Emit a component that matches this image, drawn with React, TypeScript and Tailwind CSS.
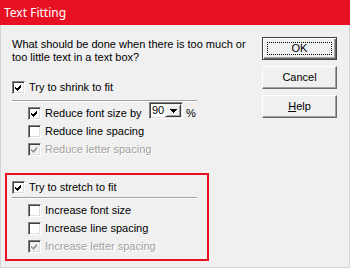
import type { ReactNode } from "react";

function Check({ checked, disabled }: { checked?: boolean; disabled?: boolean }) {
  return (
    <span
      className={`w-[13px] h-[13px] shrink-0 flex items-center justify-center border border-t-[#808080] border-l-[#808080] border-b-white border-r-white shadow-[inset_1px_1px_0_#404040,inset_-1px_-1px_0_#dfdfdf] ${
        disabled ? "bg-[#f0f0f0]" : "bg-white"
      }`}
    >
      {checked && (
        <svg width="11" height="11" viewBox="0 0 11 11" shapeRendering="crispEdges">
          <path d="M2 4.5 L4 6.5 L8 2.5 L8 5 L4 9 L2 7 Z" fill={disabled ? "#a0a0a0" : "#000"} />
        </svg>
      )}
    </span>
  );
}

function Label({ children, disabled }: { children: ReactNode; disabled?: boolean }) {
  return (
    <span
      className={`ml-[4px] whitespace-nowrap ${
        disabled ? "text-[#a0a0a0] [text-shadow:1px_1px_0_#ffffff]" : "text-black"
      }`}
    >
      {children}
    </span>
  );
}

function Header({ label }: { label: string }) {
  return (
    <div className="h-[16px] flex items-center">
      <Check checked />
      <Label>{label}</Label>
    </div>
  );
}

function Option({ label, checked, disabled }: { label: string; checked?: boolean; disabled?: boolean }) {
  return (
    <div className="h-[18px] pl-[16px] flex items-center">
      <Check checked={checked} disabled={disabled} />
      <Label disabled={disabled}>{label}</Label>
    </div>
  );
}

function Separator() {
  return <div className="w-[185px] h-[2px] border-t border-t-[#a0a0a0] border-b border-b-white" />;
}

function Button({ children, isDefault }: { children: ReactNode; isDefault?: boolean }) {
  if (isDefault) {
    return (
      <div className="relative w-[75px] h-[23px] flex items-center justify-center bg-[#f0f0f0] border border-[#404040] shadow-[inset_1px_1px_0_#ffffff,inset_-1px_-1px_0_#696969,inset_-2px_-2px_0_#a0a0a0]">
        <span className="absolute inset-[4px] border border-dotted border-black" />
        {children}
      </div>
    );
  }
  return (
    <div className="w-[75px] h-[23px] flex items-center justify-center bg-[#f0f0f0] border border-t-white border-l-white border-b-[#696969] border-r-[#696969] shadow-[inset_-1px_-1px_0_#a0a0a0]">
      {children}
    </div>
  );
}

export default function App() {
  return (
    <div className="w-[350px] h-[268px] flex flex-col font-['Liberation_Sans',Tahoma,Arial,sans-serif] text-[11px] text-black">
      <div className="h-[25px] shrink-0 bg-[#e81123] text-white text-[12px] flex items-center pl-[4px] font-['Noto_Sans','Liberation_Sans',sans-serif]">
        Text Fitting
      </div>

      <div className="flex-1 flex bg-[#f0f0f0] border-x border-b border-[#d4d4d4]">
        <div className="flex-1 pl-[4px] pt-[13px]">
          <p className="pl-[7px] leading-[13px] whitespace-nowrap">
            What should be done when there is too much or
            <br />
            too little text in a text box?
          </p>

          <div className="pl-[7px] mt-[15px]">
            <Header label="Try to shrink to fit" />
            <div className="mt-[5px]">
              <Separator />
            </div>
            <div className="mt-[2px]">
              <div className="h-[18px] pl-[16px] flex items-center">
                <Check checked />
                <span className="ml-[4px] w-[102px] overflow-hidden whitespace-nowrap">Reduce font size by</span>
                <div className="ml-[2px] self-start -mt-[2px] w-[34px] h-[17px] bg-white flex items-center border border-t-[#808080] border-l-[#808080] border-b-white border-r-white shadow-[inset_1px_1px_0_#404040,inset_-1px_-1px_0_#dfdfdf]">
                  <span className="pl-[2px]">90</span>
                  <span className="ml-auto mr-[1px] w-[16px] h-[13px] bg-[#f0f0f0] flex items-center justify-center border border-t-[#f0f0f0] border-l-[#f0f0f0] border-b-[#404040] border-r-[#404040] shadow-[inset_1px_1px_0_#ffffff,inset_-1px_-1px_0_#a0a0a0]">
                    <svg width="7" height="4" viewBox="0 0 7 4" shapeRendering="crispEdges">
                      <path d="M0 0 H7 L3.5 4 Z" fill="#000" />
                    </svg>
                  </span>
                </div>
                <span className="ml-[3px]">%</span>
              </div>
              <Option label="Reduce line spacing" />
              <Option label="Reduce letter spacing" checked disabled />
            </div>
          </div>

          <div className="mt-[15px] w-[204px] border-2 border-[#e81123] pl-[5px] pt-[4px] pb-[4px]">
            <Header label="Try to stretch to fit" />
            <div className="mt-[2px]">
              <Separator />
            </div>
            <div className="mt-[2px]">
              <Option label="Increase font size" />
              <Option label="Increase line spacing" />
              <Option label="Increase letter spacing" checked disabled />
            </div>
          </div>
        </div>

        <div className="pr-[12px] pt-[12px] flex flex-col gap-[6px]">
          <Button isDefault>OK</Button>
          <Button>Cancel</Button>
          <Button>
            <span>
              <span className="underline underline-offset-[1px]">H</span>elp
            </span>
          </Button>
        </div>
      </div>
    </div>
  );
}
